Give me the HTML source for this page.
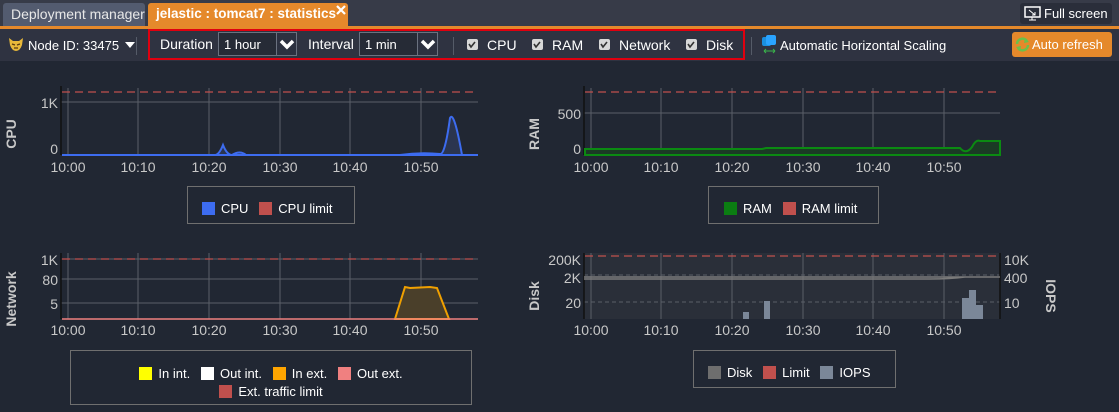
<!DOCTYPE html>
<html><head><style>
*{margin:0;padding:0;box-sizing:border-box}
body{width:1119px;height:412px;background:#212733;font-family:"Liberation Sans",sans-serif;position:relative;overflow:hidden;color:#fff}
.a{position:absolute}
.tb{background:#373b48;left:0;top:0;width:1119px;height:27px}
.tab{top:3px;height:23px;font-size:14px;line-height:22px;padding-left:9px;border-radius:3px 3px 0 0;white-space:nowrap}
.tool{left:0;top:29px;width:1119px;height:32px;background:#2f3341}
.t13{font-size:13px;white-space:nowrap}
.sel{height:24px;border:1px solid #6b7280;background:#262b36;font-size:13px;line-height:24px;padding-left:5px;color:#fff}
.sel b{position:absolute;right:0;top:0;width:20px;height:22px;background:#2c3140;border-left:1px solid #6b7280}
.cb{width:11px;height:11px;background:#d8d8d8;border-radius:2px}
.lg{border:1px solid #6f6f6f;font-size:13px;white-space:nowrap}
.sw{display:inline-block;width:13px;height:13px;vertical-align:-2px;margin-right:6px}
</style></head><body>
<div class="a tb"></div>
<div class="a tab" style="left:3px;width:142px;background:#535b6f;color:#e8e8e8;padding-left:8px">Deployment manager</div>
<div class="a tab" style="left:148px;width:200px;background:#e5892b;font-weight:bold;padding-left:8px;font-size:13.5px">jelastic : tomcat7 : statistics</div>
<svg class="a" style="left:336px;top:5px" width="10" height="10"><path d="M1 1L9 9M9 1L1 9" stroke="#fff" stroke-width="2.2"/></svg>
<div class="a" style="left:1020px;top:3px;width:92px;height:21px;border-radius:3px;background:#2a2e3a;font-size:13px;line-height:21px;padding-left:24px;white-space:nowrap">Full screen
<svg class="a" style="left:4px;top:3px" width="17" height="15"><rect x="1" y="1" width="15" height="10" fill="none" stroke="#fff" stroke-width="1.5"/><path d="M5 14h7M8 11v3M5 4l6 5M11 6v3H8" stroke="#fff" fill="none"/></svg></div>
<div class="a" style="left:0;top:26px;width:1119px;height:3px;background:#e5892b"></div>
<div class="a tool"></div>
<svg class="a" style="left:8px;top:37px" width="16" height="15"><path d="M1 1L5 4H11L15 1L14 8Q12 14 8 14Q4 14 2 8Z" fill="#e9b93a"/><path d="M4 7l3 1M12 7l-3 1M6 11h4" stroke="#5a3b10" stroke-width="1.3"/></svg>
<div class="a t13" style="left:28px;top:38px">Node ID: 33475</div>
<svg class="a" style="left:125px;top:42px" width="10" height="6"><path d="M0 0H10L5 6Z" fill="#fff"/></svg>
<div class="a" style="left:136px;top:37px;width:1px;height:18px;background:#555b68"></div>
<div class="a" style="left:148px;top:29px;width:597px;height:31px;border:2px solid #e0000f"></div>
<div class="a" style="left:160px;top:36px;font-size:14px">Duration</div>
<div class="a sel" style="left:218px;top:32px;width:79px">1 hour<b><svg width="20" height="22"><path d="M4 8L10 14L16 8" stroke="#fff" stroke-width="3.5" fill="none"/></svg></b></div>
<div class="a" style="left:308px;top:36px;font-size:14px">Interval</div>
<div class="a sel" style="left:359px;top:32px;width:79px">1 min<b><svg width="20" height="22"><path d="M4 8L10 14L16 8" stroke="#fff" stroke-width="3.5" fill="none"/></svg></b></div>
<div class="a" style="left:453px;top:37px;width:1px;height:18px;background:#555b68"></div>
<svg class="a" style="left:0;top:0" width="800" height="60"><g fill="#d8d8d8"><rect x="467" y="39" width="11" height="11" rx="2"/><rect x="532" y="39" width="11" height="11" rx="2"/><rect x="599" y="39" width="11" height="11" rx="2"/><rect x="686" y="39" width="11" height="11" rx="2"/></g><g stroke="#333" stroke-width="1.6" fill="none"><path d="M469 44l2 3l4-5M534 44l2 3l4-5M601 44l2 3l4-5M688 44l2 3l4-5"/></g></svg>
<div class="a" style="left:487px;top:37px;font-size:14px">CPU</div>
<div class="a" style="left:552px;top:37px;font-size:14px">RAM</div>
<div class="a" style="left:619px;top:37px;font-size:14px">Network</div>
<div class="a" style="left:706px;top:37px;font-size:14px">Disk</div>
<div class="a" style="left:751px;top:37px;width:1px;height:18px;background:#555b68"></div>
<svg class="a" style="left:761px;top:34px" width="17" height="20"><rect x="1" y="3" width="9" height="9" rx="2" fill="#1a8fe0"/><rect x="5" y="1" width="10" height="10" rx="2" fill="#2aa3ff"/><path d="M3 17h11M3 17l2-2M3 17l2 2M14 17l-2-2M14 17l-2 2" stroke="#3ab54a" fill="none"/></svg>
<div class="a t13" style="left:780px;top:38px">Automatic Horizontal Scaling</div>
<div class="a" style="left:1012px;top:32px;width:100px;height:25px;background:#e5892b;border-radius:3px;font-size:13px;line-height:25px;padding-left:20px;white-space:nowrap">Auto refresh
<svg class="a" style="left:3px;top:5px" width="15" height="15"><path d="M2 7A5.5 5.5 0 0 1 12 4M13 8A5.5 5.5 0 0 1 3 11" stroke="#6cc04a" stroke-width="2.5" fill="none"/><path d="M10 1L14 5L9 6Z M5 14L1 10L6 9Z" fill="#6cc04a"/></svg></div>

<svg class="a" style="left:0;top:0" width="1119" height="412" font-family="Liberation Sans" font-size="14" fill="#c8c8c8">
<g stroke="#5a5f68" stroke-width="1">
<path d="M61 102H478M68 88V155M138 88V155M209 88V155M280 88V155M350 88V155M421 88V155"/>
<path d="M584 113H1000M591 88V155M661 88V155M732 88V155M803 88V155M873 88V155M944 88V155"/>
<path d="M61 259H478M61 279H478M61 303H478M68 253V319M138 253V319M209 253V319M280 253V319M350 253V319M421 253V319"/>
</g>
<rect x="584" y="253" width="416" height="66" fill="#2a2f39"/>
<g stroke="#5a5f68"><path d="M591 253V319M661 253V319M732 253V319M803 253V319M873 253V319M944 253V319"/><path d="M584 302H1000M584 275H1000" stroke-dasharray="4 3"/></g>
<path d="M61 86V155M584 86V155M61 253V319M584 253V319M1000 253V319" stroke="#111" stroke-width="1.5"/>
<g stroke="#c0504d" stroke-width="1.3" stroke-dasharray="8 5"><path d="M62 92H478M585 92H1000M62 259H478M585 256H1000"/></g>
<path d="M62 155H215Q219 155 223 145Q227 155 232 155Q240 150 246 155H400Q420 152 440 154Q445 155 450 118Q454 110 462 155H478V155Z" fill="#2b3550" stroke="#3d6cf0" stroke-width="2"/>
<path d="M585 149H762L766 148H960Q966 155 972 147Q976 139 980 141H1000V155H585Z" fill="#1b3a25" stroke="#0b8a12" stroke-width="2"/>
<path d="M395 319L405 287L410 288L430 287L437 288L449 319Z" fill="#4a3f2a" stroke="#f0a000" stroke-width="2"/>
<path d="M62 319H478" stroke="#f08080" stroke-width="1.5"/>
<path d="M584 279H930Q950 279 965 277H1000M584 277H1000" stroke="#7a7a7a" stroke-width="1.5" fill="none"/>
<g fill="#7b8798"><rect x="743" y="312" width="6" height="7"/><rect x="764" y="301" width="6" height="18"/><rect x="962" y="298" width="7" height="21"/><rect x="969" y="290" width="7" height="29"/><rect x="976" y="305" width="7" height="14"/></g>
<g text-anchor="end"><text x="58" y="108">1K</text><text x="58" y="154">0</text><text x="581" y="119">500</text><text x="581" y="154">0</text>
<text x="58" y="265">1K</text><text x="58" y="285">80</text><text x="58" y="309">5</text>
<text x="581" y="265">200K</text><text x="581" y="283">2K</text><text x="581" y="308">20</text></g>
<text x="1004" y="265">10K</text><text x="1004" y="283">400</text><text x="1004" y="308">10</text>
<g text-anchor="middle"><text x="68" y="172">10:00</text><text x="138" y="172">10:10</text><text x="209" y="172">10:20</text><text x="280" y="172">10:30</text><text x="350" y="172">10:40</text><text x="421" y="172">10:50</text>
<text x="591" y="172">10:00</text><text x="661" y="172">10:10</text><text x="732" y="172">10:20</text><text x="803" y="172">10:30</text><text x="873" y="172">10:40</text><text x="944" y="172">10:50</text>
<text x="68" y="335">10:00</text><text x="138" y="335">10:10</text><text x="209" y="335">10:20</text><text x="280" y="335">10:30</text><text x="350" y="335">10:40</text><text x="421" y="335">10:50</text>
<text x="591" y="335">10:00</text><text x="661" y="335">10:10</text><text x="732" y="335">10:20</text><text x="803" y="335">10:30</text><text x="873" y="335">10:40</text><text x="944" y="335">10:50</text></g>
<g font-weight="bold" fill="#c8c8c8" font-size="14" text-anchor="middle">
<text transform="translate(16 134) rotate(-90)">CPU</text>
<text transform="translate(539 134) rotate(-90)">RAM</text>
<text transform="translate(16 299) rotate(-90)">Network</text>
<text transform="translate(539 296) rotate(-90)">Disk</text>
<text transform="translate(1046 296) rotate(90)">IOPS</text></g>
</svg>

<div class="a lg" style="left:187px;top:186px;width:168px;height:38px;padding:14px 0 0 14px"><span class="sw" style="background:#3d6cf0"></span>CPU &nbsp;&nbsp;<span class="sw" style="background:#c0504d"></span>CPU limit</div>
<div class="a lg" style="left:708px;top:186px;width:171px;height:38px;padding:14px 0 0 15px"><span class="sw" style="background:#0b7d12"></span>RAM &nbsp;&nbsp;<span class="sw" style="background:#c0504d"></span>RAM limit</div>
<div class="a lg" style="left:70px;top:350px;width:402px;height:55px;text-align:center;padding-top:14px;line-height:18px"><span class="sw" style="background:#ff0"></span>In int. &nbsp;&nbsp;<span class="sw" style="background:#fff"></span>Out int. &nbsp;&nbsp;<span class="sw" style="background:#ffa500"></span>In ext. &nbsp;&nbsp;<span class="sw" style="background:#f08080"></span>Out ext.<br><span class="sw" style="background:#c0504d"></span>Ext. traffic limit</div>
<div class="a lg" style="left:693px;top:350px;width:203px;height:38px;padding:14px 0 0 14px"><span class="sw" style="background:#6e6e6e"></span>Disk &nbsp;&nbsp;<span class="sw" style="background:#c0504d"></span>Limit &nbsp;&nbsp;<span class="sw" style="background:#7b8798"></span>IOPS</div>
</body></html>
